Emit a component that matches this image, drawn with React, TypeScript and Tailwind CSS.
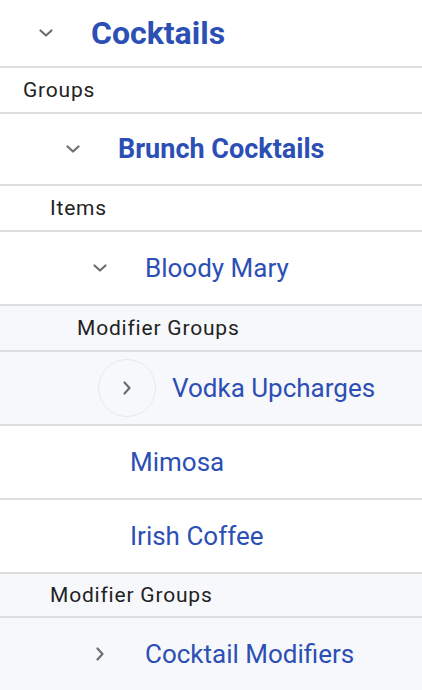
import { ReactNode } from 'react'

type Chevron = 'down' | 'right' | 'none'

function ChevronIcon({ dir }: { dir: 'down' | 'right' }) {
  return (
    <svg
      width="14"
      height="14"
      viewBox="0 0 14 14"
      fill="none"
      stroke="#6e6e6e"
      strokeWidth="2.2"
      strokeLinecap="round"
      strokeLinejoin="round"
      className={dir === 'right' ? '-rotate-90' : ''}
    >
      <path d="M1.5 4.5 L7 9.5 L12.5 4.5" />
    </svg>
  )
}

interface NodeRowProps {
  indent: string
  chevron: Chevron
  label: string
  bold?: boolean
  size: string
  height: string
  tinted?: boolean
  ring?: boolean
}

function NodeRow({ indent, chevron, label, bold, size, height, tinted, ring }: NodeRowProps) {
  return (
    <div
      className={`flex items-center border-b-2 border-[#dedede] ${height} ${indent} ${
        tinted ? 'bg-[#f7f8fb]' : 'bg-white'
      }`}
    >
      {chevron !== 'none' && (
        <div
          className={`mr-4 flex h-[58px] w-[58px] shrink-0 items-center justify-center rounded-full ${
            ring ? 'border border-[#e9e9ec]' : ''
          }`}
        >
          <ChevronIcon dir={chevron} />
        </div>
      )}
      <span
        className={`${size} leading-none text-[#2c4fb5] ${bold ? 'font-bold' : 'font-normal'}`}
      >
        {label}
      </span>
    </div>
  )
}

function SectionLabel({ indent, children, tinted, height = 'h-[46px]' }: { indent: string; children: ReactNode; tinted?: boolean; height?: string }) {
  return (
    <div
      className={`flex items-center border-b-2 border-[#dedede] ${height} ${indent} ${
        tinted ? 'bg-[#f7f8fb]' : 'bg-white'
      }`}
    >
      <span className="text-[21px] leading-none tracking-[0.8px] text-[#222222]">{children}</span>
    </div>
  )
}

export default function App() {
  return (
    <div className="h-[690px] w-[422px] overflow-hidden bg-white font-['Roboto',sans-serif]">
      <NodeRow indent="pl-[17px]" chevron="down" label="Cocktails" bold size="text-[32px]" height="h-[68px]" />
      <SectionLabel indent="pl-[23px]">Groups</SectionLabel>
      <NodeRow indent="pl-[44px]" chevron="down" label="Brunch Cocktails" bold size="text-[27px]" height="h-[72px]" />
      <SectionLabel indent="pl-[50px]">Items</SectionLabel>
      <NodeRow indent="pl-[71px]" chevron="down" label="Bloody Mary" size="text-[26px]" height="h-[74px]" />
      <SectionLabel indent="pl-[77px]" tinted>Modifier Groups</SectionLabel>
      <NodeRow indent="pl-[98px]" chevron="right" label="Vodka Upcharges" size="text-[26px]" height="h-[74px]" tinted ring />
      <NodeRow indent="pl-[130px]" chevron="none" label="Mimosa" size="text-[26px]" height="h-[74px]" />
      <NodeRow indent="pl-[130px]" chevron="none" label="Irish Coffee" size="text-[26px]" height="h-[74px]" />
      <SectionLabel indent="pl-[50px]" tinted height="h-[44px]">Modifier Groups</SectionLabel>
      <NodeRow indent="pl-[71px]" chevron="right" label="Cocktail Modifiers" size="text-[26px]" height="h-[74px]" tinted />
    </div>
  )
}
